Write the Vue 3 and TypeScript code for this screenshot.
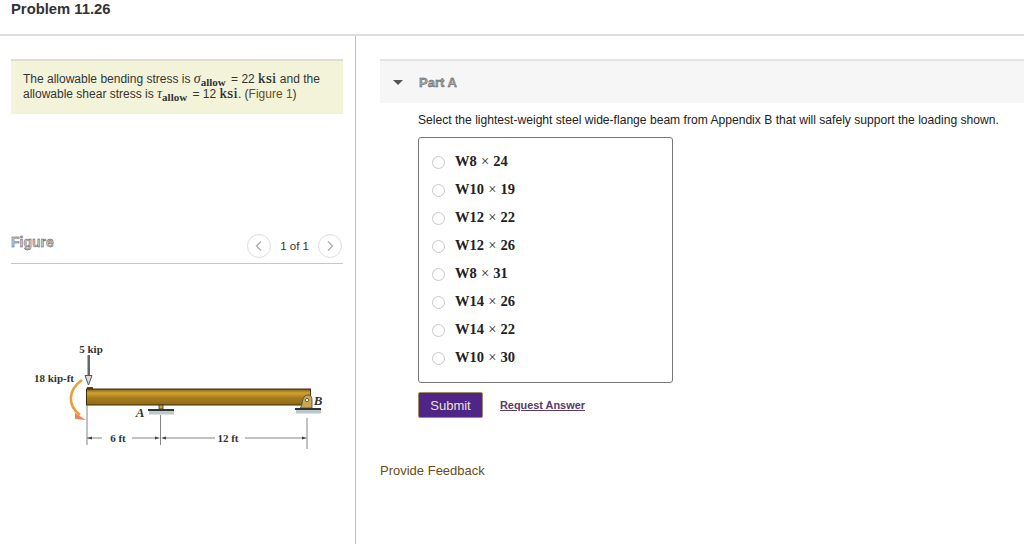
<script setup lang="ts">
interface Beam { size: string; weight: string }
const options: Beam[] = [
  { size: 'W8', weight: '24' },
  { size: 'W10', weight: '19' },
  { size: 'W12', weight: '22' },
  { size: 'W12', weight: '26' },
  { size: 'W8', weight: '31' },
  { size: 'W14', weight: '26' },
  { size: 'W14', weight: '22' },
  { size: 'W10', weight: '30' },
]
</script>

<template>
  <div class="page">
    <header class="top"><h1>Problem 11.26</h1></header>
    <div class="cols">
      <section class="left">
        <div class="note">
          <p>The allowable bending stress is <i class="m">σ</i><b class="sub">allow</b> = 22 <b class="m ksi">ksi</b> and the</p>
          <p>allowable shear stress is <i class="m">τ</i><b class="sub">allow</b> = 12 <b class="m ksi">ksi</b>. (<span class="flink">Figure 1</span>)</p>
        </div>
        <div class="figbar">
          <span class="figtitle">Figure</span>
          <div class="pager">
            <span class="circle"><svg width="22" height="22" viewBox="0 0 22 22"><path d="M13 6.500 8.500 11l4.500 4.500" fill="none" stroke="#aaa" stroke-width="1.300"/></svg></span>
            <span class="count">1 of 1</span>
            <span class="circle"><svg width="22" height="22" viewBox="0 0 22 22"><path d="M9 6.500 13.500 11 9 15.500" fill="none" stroke="#aaa" stroke-width="1.300"/></svg></span>
          </div>
        </div>
        <svg class="diagram" width="340" height="130" viewBox="0 0 340 130">
          <defs>
            <linearGradient id="beam" x1="0" y1="0" x2="0" y2="1">
              <stop offset="0" stop-color="#7a5a14"/>
              <stop offset="0.25" stop-color="#d2a233"/>
              <stop offset="0.55" stop-color="#a67c1e"/>
              <stop offset="1" stop-color="#8f6a17"/>
            </linearGradient>
          </defs>
          <text x="91" y="23" class="dt" text-anchor="middle">5 kip</text>
          <text x="54" y="52" class="dt" text-anchor="middle">18 kip-ft</text>
          <rect x="87.500" y="25" width="2.500" height="20" fill="#666"/>
          <path d="M85 45.500h7l-3.500 9.500z" fill="#ddd" stroke="#555" stroke-width="1"/>
          <rect x="87" y="57" width="6" height="2" fill="#6b4a0a"/>
          <rect x="86.500" y="59" width="224" height="16" fill="url(#beam)" stroke="#3e2c07" stroke-width="1"/>
          <path d="M82 50C68 60 67 75 80 85" fill="none" stroke="#eb9f3c" stroke-width="2.600"/>
          <path d="M75 83 86 90 75 89z" fill="#e8855a"/>
          <rect x="159" y="75" width="4" height="4" fill="#c9a23c" stroke="#333" stroke-width="0.800"/>
          <rect x="148" y="79" width="26" height="2" fill="#333"/>
          <rect x="149" y="81" width="25" height="3.500" fill="#bcc8cc"/>
          <path d="M300 78c2-1 2-6 3-9 1-3 3-4 5-4 3 0 4 2 4 5v8z" fill="#c9a84e" stroke="#444" stroke-width="0.800"/>
          <circle cx="307" cy="70" r="1.700" fill="#fff" stroke="#333" stroke-width="0.700"/>
          <rect x="295" y="78" width="26" height="2" fill="#333"/>
          <rect x="296" y="80" width="25" height="3.500" fill="#bcc8cc"/>
          <text x="140" y="87" class="dl" text-anchor="middle">A</text>
          <text x="318" y="75" class="dl" text-anchor="middle">B</text>
          <g stroke="#777" stroke-width="0.900" fill="none">
            <path d="M87 75v40M160.500 85v30M307 88v31"/>
            <path d="M87 108h15M132 108h25M163 108h52M245 108h57"/>
          </g>
          <path d="M87 108l5-1.500v3zM160 108l-5-1.500v3zM161 108l5-1.500v3zM307 108l-5-1.500v3z" fill="#444"/>
          <text x="118" y="112" class="dt" text-anchor="middle">6 ft</text>
          <text x="228" y="112" class="dt" text-anchor="middle">12 ft</text>
        </svg>
      </section>
      <section class="right">
        <div class="parthead"><span class="caret"></span><span class="parttitle">Part A</span></div>
        <div class="body">
          <p class="question">Select the lightest-weight steel wide-flange beam from Appendix B that will safely support the loading shown.</p>
          <div class="box">
            <label v-for="o in options" :key="o.size + o.weight" class="opt">
              <span class="radio"></span>
              <span class="val">{{ o.size }} <span class="times">×</span> {{ o.weight }}</span>
            </label>
          </div>
          <div class="actions">
            <button class="submit" type="button">Submit</button>
            <a class="req">Request Answer</a>
          </div>
        </div>
        <a class="feedback">Provide Feedback</a>
      </section>
    </div>
  </div>
</template>

<style>
html, body { margin: 0; background: #fff; }
</style>

<style scoped>
.page { width: 1024px; height: 544px; overflow: hidden; font-family: "Liberation Sans", Arial, sans-serif; color: #222; }
.top { height: 34px; border-bottom: 2px solid #dcdcdc; }
h1 { margin: 0; padding-left: 11px; font-size: 14.800px; line-height: 18px; font-weight: 700; color: #333; }
.cols { display: flex; height: 508px; }
.left { width: 355px; border-right: 1px solid #c9bdb4; padding-top: 23px; }
.note { margin: 0 12px 0 11px; height: 42px; background: #f3f3da; border-top: 2px solid #dfdfd0; padding: 11px 12px 0; font-size: 12px; line-height: 15px; color: #333; }
.note p { margin: 0; white-space: nowrap; }
.m { font-family: "Liberation Serif", serif; font-size: 14px; line-height: 0; }
.ksi { font-size: 15px; font-weight: 400; letter-spacing: 0.300px; color: #222; -webkit-text-stroke: 0.200px #222; }
.sub { font-family: "Liberation Serif", serif; font-size: 11px; line-height: 0; position: relative; top: 3px; margin-right: 2px; }
.flink { color: #6d4c12; }
.figbar { margin: 116px 12px 0 11px; height: 33px; border-bottom: 1px solid #c8c8c8; display: flex; align-items: flex-start; justify-content: space-between; }
.figtitle { font-size: 14px; font-weight: 700; color: #c8c8c8; -webkit-text-stroke: 0.400px #444; line-height: 17px; margin-top: 4px; }
.pager { display: flex; align-items: center; gap: 9px; margin-top: 4px; margin-right: 1px; }
.circle { width: 22px; height: 22px; border: 1px solid #ddd; border-radius: 50%; display: flex; align-items: center; justify-content: center; }
.count { font-size: 11.500px; color: #333; }
.diagram { display: block; margin-top: 66px; }
.dt { font-family: "Liberation Serif", serif; font-weight: 700; font-size: 11px; fill: #333; }
.dl { font-family: "Liberation Serif", serif; font-weight: 700; font-style: italic; font-size: 13px; fill: #333; }
.right { flex: 1; padding-top: 23px; }
.parthead { height: 42px; background: #f6f6f6; border-top: 2px solid #e4e4e4; margin-left: 24px; display: flex; align-items: center; }
.caret { width: 0; height: 0; margin-left: 13px; border-left: 5px solid transparent; border-right: 5px solid transparent; border-top: 5px solid #555; }
.parttitle { margin-left: 16px; font-size: 13px; font-weight: 700; color: #aaa; -webkit-text-stroke: 0.400px #444; }
.body { margin-left: 62px; }
.question { margin: 10px 0 0; font-size: 12.100px; line-height: 15px; color: #222; white-space: nowrap; }
.box { margin-top: 9px; height: 233px; border: 1px solid #777; border-radius: 3px; padding: 9px 0 2px 13px; width: 240px; display: flex; flex-direction: column; }
.opt { height: 28px; flex: none; display: flex; align-items: center; }
.radio { width: 11px; height: 11px; border: 1.500px solid #c8c8c8; border-radius: 50%; flex: none; position: relative; top: 1px; }
.val { margin-left: 10px; font-family: "Liberation Serif", serif; font-weight: 700; font-size: 14.500px; word-spacing: 0.500px; color: #222; white-space: pre; }
.times { font-weight: 400; }
.actions { margin-top: 9px; display: flex; align-items: center; }
.submit { width: 65px; height: 26px; padding: 0; background: #4f2587; color: #eee3cf; border: 1px solid #a08a60; border-radius: 2px; font: 13px "Liberation Sans", Arial, sans-serif; }
.req { margin-left: 17px; font-size: 10.900px; font-weight: 700; color: #5a3a6a; text-decoration: underline; }
.feedback { display: block; margin: 45px 0 0 24px; font-size: 13px; line-height: 15px; color: #6d4c12; }
</style>
